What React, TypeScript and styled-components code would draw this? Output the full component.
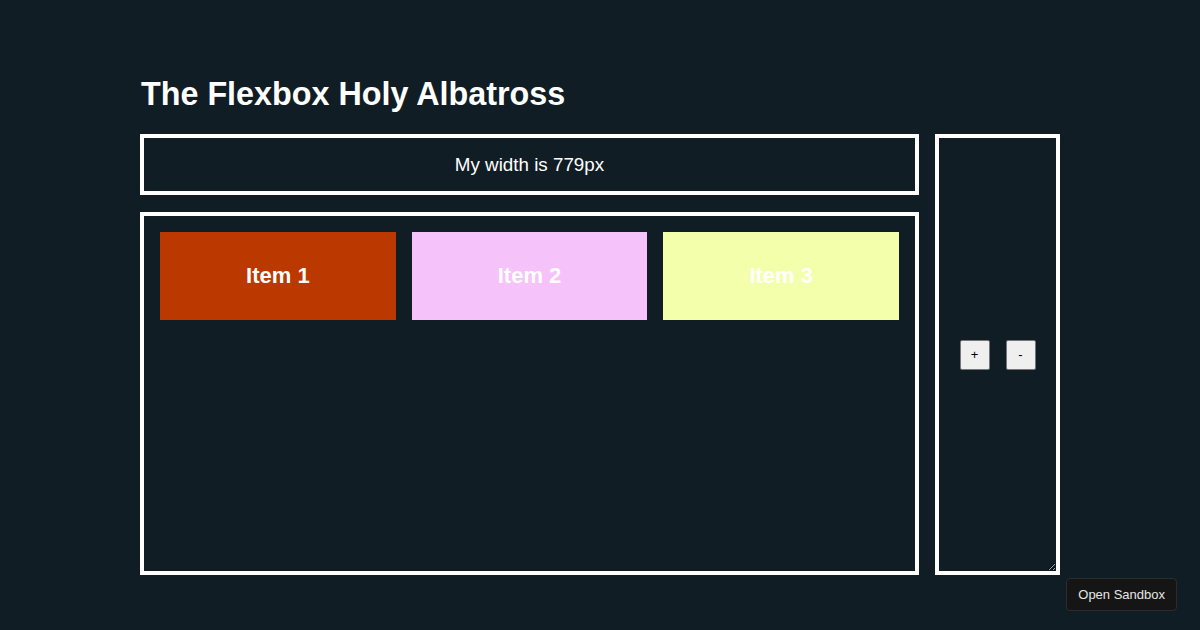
import styled, { createGlobalStyle } from 'styled-components';

const items = [
	{ label: 'Item 1', color: '#bb3800' },
	{ label: 'Item 2', color: '#f5c2f9' },
	{ label: 'Item 3', color: '#f4ffab' },
];

const App = () => {
	return (
		<>
			<GlobalStyle />
			<Page>
				<Title>The Flexbox Holy Albatross</Title>
				<Layout>
					<Main>
						<WidthBox>My width is 779px</WidthBox>
						<ItemsBox>
							{items.map(item => (
								<Item key={item.label} $bg={item.color}>
									{item.label}
								</Item>
							))}
						</ItemsBox>
					</Main>
					<Side>
						<SmallButton>+</SmallButton>
						<SmallButton>-</SmallButton>
					</Side>
				</Layout>
			</Page>
			<SandboxButton>Open Sandbox</SandboxButton>
		</>
	);
};

const GlobalStyle = createGlobalStyle`
	html, body {
		margin: 0;
		padding: 0;
		background: #111d25;
		color: #fff;
		font-family: 'Liberation Sans', Arial, sans-serif;
	}
`;

const Page = styled.div`
	width: 920px;
	margin: 0 auto;
	padding-top: 73px;
`;

const Title = styled.h1`
	margin: 0 0 19px 1px;
	font-size: 32.3px;
	font-weight: 700;
	line-height: 42px;
	color: #fff;
`;

const Layout = styled.div`
	display: flex;
	gap: 16px;
	height: 441px;
`;

const Main = styled.div`
	flex: 1;
	display: flex;
	flex-direction: column;
	gap: 17px;
`;

const WidthBox = styled.div`
	box-sizing: border-box;
	height: 61px;
	border: 4px solid #fff;
	display: flex;
	align-items: center;
	justify-content: center;
	padding-top: 1px;
	font-size: 18.8px;
`;

const ItemsBox = styled.div`
	box-sizing: border-box;
	flex: 1;
	border: 4px solid #fff;
	padding: 16px;
	display: flex;
	align-items: flex-start;
	gap: 16px;
`;

const Item = styled.div<{ $bg: string }>`
	flex: 1;
	height: 88px;
	background: ${p => p.$bg};
	display: flex;
	align-items: center;
	justify-content: center;
	font-size: 22px;
	font-weight: 700;
	color: #fff;
`;

const Side = styled.div`
	box-sizing: border-box;
	width: 125px;
	border: 4px solid #fff;
	display: flex;
	align-items: center;
	justify-content: center;
	gap: 16px;
	resize: both;
	overflow: auto;
`;

const SmallButton = styled.button`
	width: 30px;
	height: 30px;
	padding: 0;
	background: #efefef;
	border: 1px solid #767676;
	border-radius: 2px;
	font-family: 'Liberation Sans', Arial, sans-serif;
	font-size: 13px;
	color: #000;
`;

const SandboxButton = styled.button`
	position: fixed;
	right: 23px;
	bottom: 19px;
	height: 33px;
	padding: 0 11px;
	white-space: nowrap;
	background: #151515;
	border: 1px solid #2c2c2c;
	border-radius: 4px;
	color: #e6e6e6;
	font-family: 'Liberation Sans', Arial, sans-serif;
	font-size: 13px;
`;

export default App;
